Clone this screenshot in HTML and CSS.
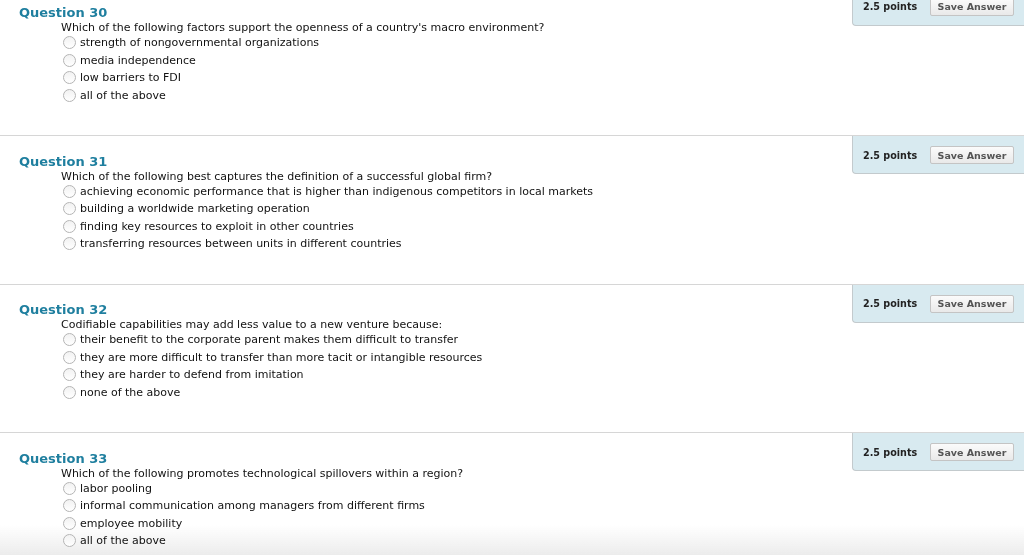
FILE: index.html
```html
<!DOCTYPE html>
<html>
<head>
<meta charset="utf-8">
<link rel="stylesheet" href="styles.css">
</head>
<body>
<div class="page">
  <div class="q">
    <div class="q-main">
      <h3 class="q-title">Question 30</h3>
      <div class="q-body">
        <div class="q-text">Which of the following factors support the openness of a country's macro environment?</div>
        <ul class="opts">
          <li><span class="radio"></span>strength of nongovernmental organizations</li>
          <li><span class="radio"></span>media independence</li>
          <li><span class="radio"></span>low barriers to FDI</li>
          <li><span class="radio"></span>all of the above</li>
        </ul>
      </div>
    </div>
    <div class="q-meta"><span class="pts">2.5 points</span><button class="save">Save Answer</button></div>
  </div>
  <div class="q">
    <div class="q-main">
      <h3 class="q-title">Question 31</h3>
      <div class="q-body">
        <div class="q-text">Which of the following best captures the definition of a successful global firm?</div>
        <ul class="opts">
          <li><span class="radio"></span>achieving economic performance that is higher than indigenous competitors in local markets</li>
          <li><span class="radio"></span>building a worldwide marketing operation</li>
          <li><span class="radio"></span>finding key resources to exploit in other countries</li>
          <li><span class="radio"></span>transferring resources between units in different countries</li>
        </ul>
      </div>
    </div>
    <div class="q-meta"><span class="pts">2.5 points</span><button class="save">Save Answer</button></div>
  </div>
  <div class="q">
    <div class="q-main">
      <h3 class="q-title">Question 32</h3>
      <div class="q-body">
        <div class="q-text">Codifiable capabilities may add less value to a new venture because:</div>
        <ul class="opts">
          <li><span class="radio"></span>their benefit to the corporate parent makes them difficult to transfer</li>
          <li><span class="radio"></span>they are more difficult to transfer than more tacit or intangible resources</li>
          <li><span class="radio"></span>they are harder to defend from imitation</li>
          <li><span class="radio"></span>none of the above</li>
        </ul>
      </div>
    </div>
    <div class="q-meta"><span class="pts">2.5 points</span><button class="save">Save Answer</button></div>
  </div>
  <div class="q">
    <div class="q-main">
      <h3 class="q-title">Question 33</h3>
      <div class="q-body">
        <div class="q-text">Which of the following promotes technological spillovers within a region?</div>
        <ul class="opts">
          <li><span class="radio"></span>labor pooling</li>
          <li><span class="radio"></span>informal communication among managers from different firms</li>
          <li><span class="radio"></span>employee mobility</li>
          <li><span class="radio"></span>all of the above</li>
        </ul>
      </div>
    </div>
    <div class="q-meta"><span class="pts">2.5 points</span><button class="save">Save Answer</button></div>
  </div>
</div>
<div class="fade"></div>
</body>
</html>
```
FILE: styles.css
```css
html {
  background: #ffffff;
}
html, body {
  margin: 0;
  padding: 0;
  overflow: hidden;
}
body {
  font-family: "DejaVu Sans", "Liberation Sans", sans-serif;
  font-size: 11px;
  color: #111;
}
.page {
  margin-top: -13.5px;
}
.q {
  display: grid;
  grid-template-columns: 1fr 172px;
  align-items: start;
  border-top: 1px solid #d6d6d6;
  height: 148.5px;
  box-sizing: border-box;
}
.q-main {
  padding: 17.5px 0 0 19px;
}
.q-title {
  margin: 0;
  font-size: 13px;
  line-height: 16px;
  font-weight: bold;
  color: #1f7f9f;
}
.q-body {
  padding-left: 42px;
}
.q-text {
  line-height: 13px;
}
.opts {
  list-style: none;
  margin: 0;
  padding: 0;
}
.opts li {
  display: flex;
  align-items: center;
  height: 17.5px;
  white-space: nowrap;
}
.radio {
  width: 11px;
  height: 11px;
  border: 1px solid #b4b4b4;
  border-radius: 50%;
  background: linear-gradient(#f2f2f2, #ffffff);
  margin: 0 4px 0 2px;
  flex: none;
}
.q-meta {
  display: flex;
  align-items: center;
  justify-content: space-between;
  background: #d8eaf0;
  border-left: 1px solid #c3cacd;
  border-bottom: 1px solid #c3cacd;
  border-bottom-left-radius: 4px;
  padding: 10px 10px 9px 10px;
}
.pts {
  font-weight: bold;
  font-size: 9.6px;
  color: #222;
  white-space: nowrap;
  flex: none;
}
.save {
  flex: none;
  font-family: "DejaVu Sans", "Liberation Sans", sans-serif;
  font-size: 9.5px;
  font-weight: bold;
  color: #555;
  height: 18px;
  width: 84px;
  padding: 0;
  white-space: nowrap;
  border: 1px solid #c4c4c4;
  border-radius: 2px;
  background: linear-gradient(#fbfbfb, #e9e9e9);
}
.fade {
  position: fixed;
  z-index: -1;
  left: 0;
  right: 0;
  bottom: 0;
  height: 30px;
  background: linear-gradient(rgba(236,236,236,0), #ececec);
  pointer-events: none;
}
```
